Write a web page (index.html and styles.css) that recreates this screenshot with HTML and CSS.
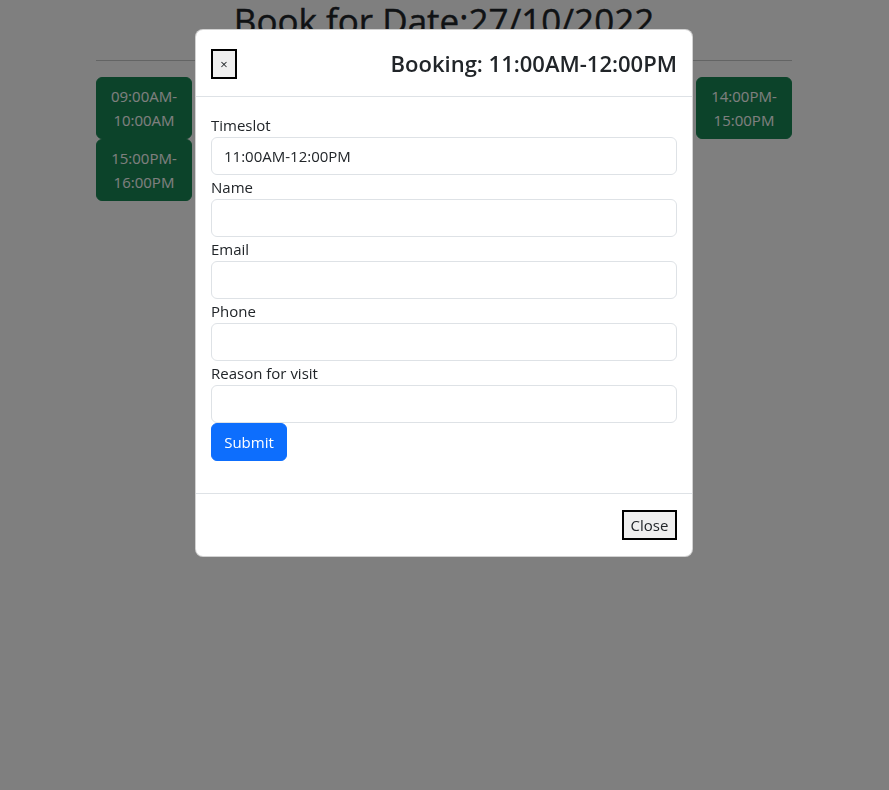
FILE: index.html
```html
<!DOCTYPE html>
<html lang="en">
<head>
<meta charset="utf-8">
<title>Book for Date</title>
<link rel="stylesheet" href="styles.css">
</head>
<body>
<div class="container">
  <h1 class="page-title">Book for Date:27/10/2022</h1>
  <hr class="divider">
  <div class="slots">
    <button class="slot">09:00AM-<br>10:00AM</button>
    <button class="slot">10:00AM-<br>11:00AM</button>
    <button class="slot">11:00AM-<br>12:00PM</button>
    <button class="slot">12:00PM-<br>13:00PM</button>
    <button class="slot">13:00PM-<br>14:00PM</button>
    <button class="slot">14:00PM-<br>15:00PM</button>
    <button class="slot">15:00PM-<br>16:00PM</button>
  </div>
</div>

<div class="backdrop"></div>

<div class="modal">
  <div class="modal-content">
    <div class="modal-header">
      <button class="plain-btn close-x">&times;</button>
      <h4 class="modal-title">Booking: 11:00AM-12:00PM</h4>
    </div>
    <div class="modal-body">
      <form class="booking-form">
        <label class="form-label">Timeslot</label>
        <input class="form-control" type="text" value="11:00AM-12:00PM" readonly>
        <label class="form-label">Name</label>
        <input class="form-control" type="text">
        <label class="form-label">Email</label>
        <input class="form-control" type="email">
        <label class="form-label">Phone</label>
        <input class="form-control" type="text">
        <label class="form-label">Reason for visit</label>
        <input class="form-control" type="text">
        <button class="btn-primary" type="button">Submit</button>
      </form>
    </div>
    <div class="modal-footer">
      <button class="plain-btn close-btn">Close</button>
    </div>
  </div>
</div>
</body>
</html>
```

FILE: styles.css
```css
* { box-sizing: border-box; }

html, body {
  margin: 0;
  padding: 0;
  background: #ffffff;
}

body {
  font-family: "Open Sans", "Noto Sans", "Liberation Sans", sans-serif;
  font-size: 15px;
  line-height: 1.6;
  color: #212529;
}

.container {
  width: 720px;
  margin: 0 0 0 84px;
  padding: 0 12px;
}

.page-title {
  margin: 0 0 18px;
  font-size: 35px;
  font-weight: 500;
  line-height: 42px;
  text-align: center;
  -webkit-text-stroke: 0.4px #212529;
}

.divider {
  margin: 0 0 16px;
  border: 0;
  border-top: 1px solid rgba(33, 37, 41, 0.25);
  height: 0;
}

.slots {
  display: grid;
  grid-template-columns: repeat(6, 96px);
  column-gap: 24px;
  row-gap: 0;
}

.slot {
  font-family: inherit;
  font-size: 15px;
  line-height: 24px;
  padding: 6px 6px;
  color: #ffffff;
  background: #198754;
  border: 1px solid #198754;
  border-radius: 6px;
  text-align: center;
  height: 62px;
}

.backdrop {
  position: fixed;
  inset: 0;
  background: rgba(0, 0, 0, 0.5);
}

.modal {
  position: fixed;
  top: 29px;
  left: 195px;
  width: 498px;
}

.modal-content {
  background: #ffffff;
  border: 1px solid rgba(0, 0, 0, 0.175);
  border-radius: 8px;
  overflow: hidden;
}

.modal-header {
  display: flex;
  align-items: center;
  justify-content: space-between;
  height: 67px;
  padding: 0 15px;
  border-bottom: 1px solid #dee2e6;
}

.modal-title {
  margin: 0;
  font-size: 22px;
  font-weight: 600;
  line-height: 30px;
  color: #212529;
}

.plain-btn {
  font-family: inherit;
  background: #efefef;
  border: 2px solid #000000;
  color: #212529;
  border-radius: 0;
  padding: 1px 6px;
  margin: 0;
}

.close-x {
  width: 26px;
  height: 30px;
  font-size: 13px;
  line-height: 20px;
  padding: 0;
  margin-top: 1px;
}

.modal-body {
  padding: 16px 15px 32px;
}

.booking-form {
  display: flex;
  flex-direction: column;
  align-items: flex-start;
}

.form-label {
  display: block;
  line-height: 24px;
  height: 24px;
  color: #212529;
}

.form-control {
  display: block;
  width: 100%;
  height: 38px;
  padding: 6px 12px;
  font-family: inherit;
  font-size: 15px;
  line-height: 24px;
  color: #212529;
  background: #ffffff;
  border: 1px solid #dee2e6;
  border-radius: 6px;
  outline: none;
}

.btn-primary {
  font-family: inherit;
  font-size: 15px;
  font-weight: 500;
  line-height: 24px;
  height: 38px;
  width: 76px;
  padding: 6px 0;
  color: #ffffff;
  background: #0d6efd;
  border: 1px solid #0d6efd;
  border-radius: 6px;
}

.modal-footer {
  display: flex;
  justify-content: flex-end;
  align-items: center;
  padding: 16px 15px 16px;
  border-top: 1px solid #dee2e6;
}

.close-btn {
  font-size: 15px;
  line-height: 22px;
  height: 30px;
  width: 55px;
  padding: 2px 0;
}
```
